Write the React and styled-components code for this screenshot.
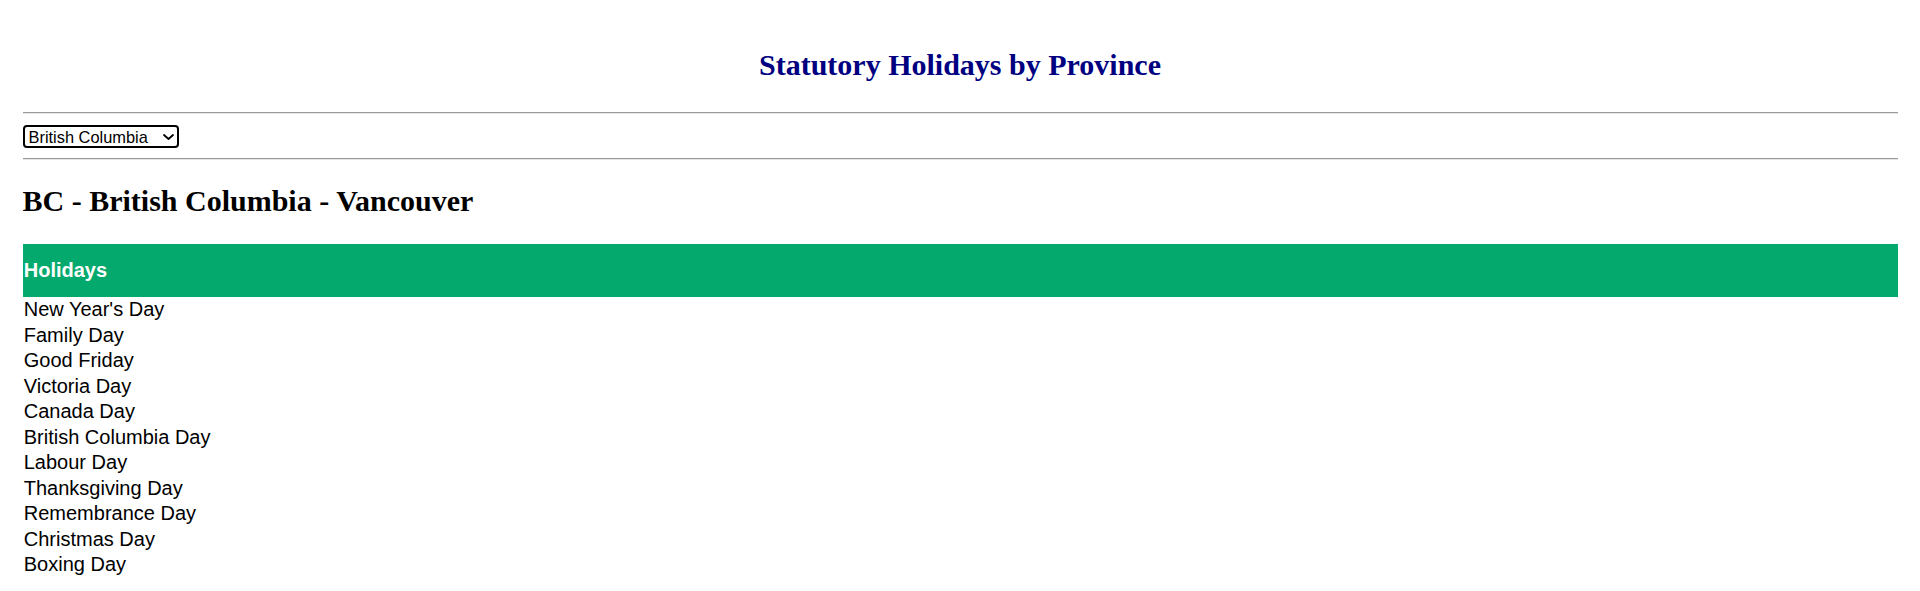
import styled, { createGlobalStyle } from 'styled-components';

const GlobalStyle = createGlobalStyle`
  body {
    margin: 0;
    background: #fff;
    font-family: "Liberation Serif", "Times New Roman", serif;
  }
`;

const Page = styled.div`
  padding: 0 22.5px 40px;
`;

const Title = styled.h2`
  margin: 48px 0 0;
  font-family: "Liberation Serif", "Times New Roman", serif;
  font-size: 30px;
  line-height: 34px;
  font-weight: bold;
  color: #000080;
  text-align: center;
`;

const Rule = styled.hr`
  margin: ${props => props.$top}px 0 0;
  height: 0;
  border: none;
  border-top: 1px solid #9a9a9a;
  border-bottom: 1px solid #e6e6e6;
`;

const SelectWrap = styled.div`
  position: relative;
  display: inline-block;
  margin-top: 11px;
  vertical-align: top;
`;

const Picker = styled.select`
  appearance: none;
  display: block;
  width: 156px;
  height: 23px;
  margin: 0;
  padding: 0 0 0 4px;
  border: 2px solid #000;
  border-radius: 4px;
  background: #fff;
  color: #000;
  font-family: "Liberation Sans", Arial, sans-serif;
  font-size: 16.4px;
  outline: none;
`;

const Chevron = styled.svg`
  position: absolute;
  right: 5px;
  top: 9px;
  width: 11px;
  height: 6px;
  pointer-events: none;
`;

const Heading = styled.h2`
  margin: 24px 0 0;
  font-family: "Liberation Serif", "Times New Roman", serif;
  font-size: 30px;
  line-height: 34px;
  font-weight: bold;
  color: #000;
`;

const Table = styled.table`
  width: 100%;
  margin-top: 26px;
  border-collapse: collapse;
  font-family: "Liberation Sans", Arial, sans-serif;
  font-size: 20px;
`;

const HeadCell = styled.th`
  padding: 15px 1.25px;
  line-height: 23px;
  text-align: left;
  font-weight: bold;
  background: #04aa6d;
  color: #fff;
`;

const Cell = styled.td`
  padding: 1.25px;
  line-height: 23px;
  color: #000;
`;

const provinces = [
  'Alberta',
  'British Columbia',
  'Manitoba',
  'New Brunswick',
  'Newfoundland and Labrador',
  'Nova Scotia',
  'Ontario',
  'Prince Edward Island',
  'Quebec',
  'Saskatchewan',
];

const holidays = [
  "New Year's Day",
  'Family Day',
  'Good Friday',
  'Victoria Day',
  'Canada Day',
  'British Columbia Day',
  'Labour Day',
  'Thanksgiving Day',
  'Remembrance Day',
  'Christmas Day',
  'Boxing Day',
];

export default function App() {
  return (
    <Page>
      <GlobalStyle />
      <Title>Statutory Holidays by Province</Title>
      <Rule $top={30} />
      <SelectWrap>
        <Picker defaultValue="British Columbia">
          {provinces.map(p => (
            <option key={p} value={p}>{p}</option>
          ))}
        </Picker>
        <Chevron viewBox="0 0 11 6" fill="none">
          <path d="M1 1l4.5 4 4.5-4" stroke="#000" strokeWidth="1.8" strokeLinecap="round" strokeLinejoin="round" />
        </Chevron>
      </SelectWrap>
      <Rule $top={10} />
      <Heading>BC - British Columbia - Vancouver</Heading>
      <Table>
        <thead>
          <tr>
            <HeadCell>Holidays</HeadCell>
          </tr>
        </thead>
        <tbody>
          {holidays.map(h => (
            <tr key={h}>
              <Cell>{h}</Cell>
            </tr>
          ))}
        </tbody>
      </Table>
    </Page>
  );
}
